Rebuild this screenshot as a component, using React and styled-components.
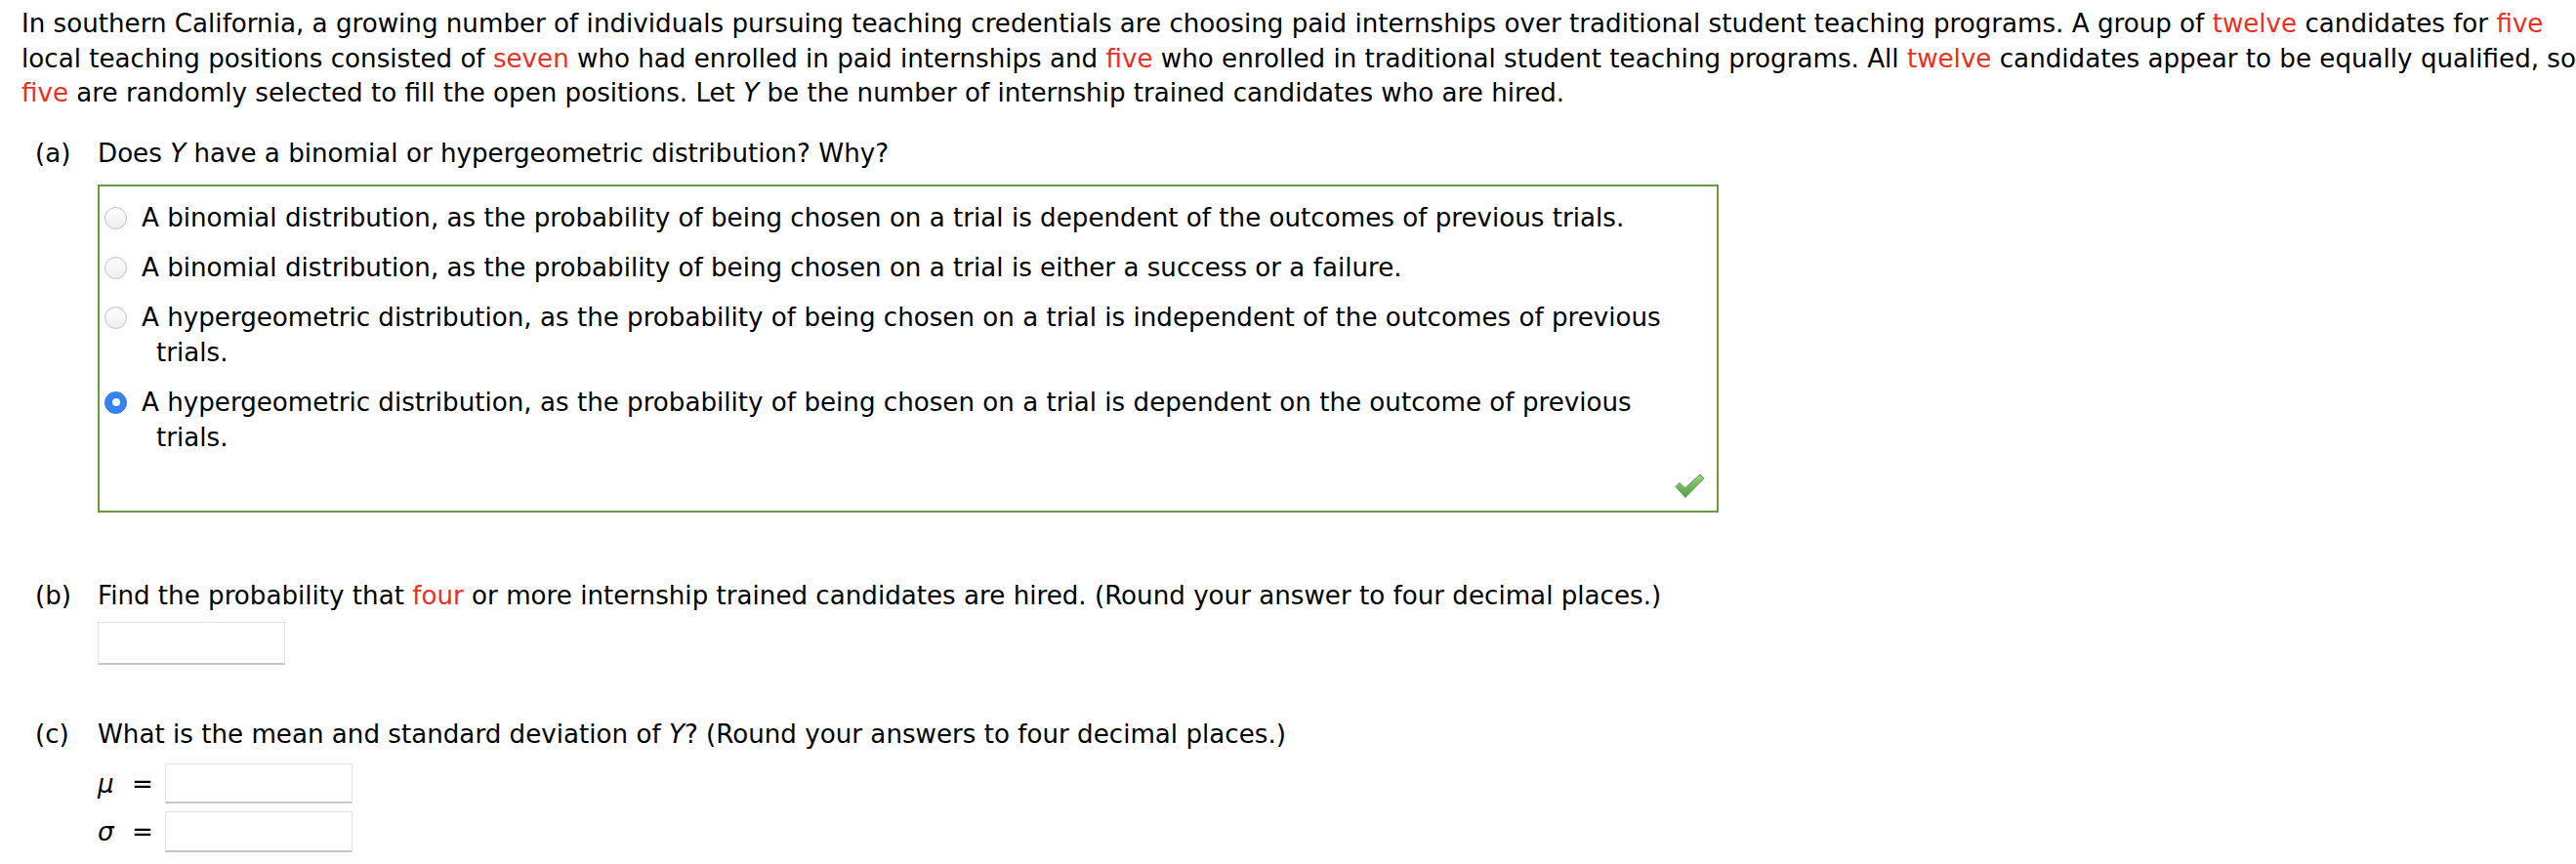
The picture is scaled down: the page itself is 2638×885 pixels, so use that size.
import React from 'react';
import styled, { createGlobalStyle } from 'styled-components';

const GlobalStyle = createGlobalStyle`
  html, body {
    margin: 0;
    padding: 0;
    background: #fff;
  }
  body {
    font-family: 'DejaVu Sans', Verdana, sans-serif;
    font-size: 26.15px;
    color: #000;
  }
`;

const Page = styled.div`
  padding: 7px 0 0 22px;
`;

const Intro = styled.p`
  margin: 0;
  line-height: 35.5px;
  white-space: nowrap;
`;

const Red = styled.span`
  color: #ec2f23;
`;

const Var = styled.i`
  font-style: italic;
`;

const Part = styled.div`
  display: flex;
  margin-top: ${(p) => p.$top}px;
  padding-left: 14px;
  line-height: 36px;
  white-space: nowrap;
`;

const PartLabel = styled.span`
  width: 64px;
  flex-shrink: 0;
`;

const Indented = styled.div`
  margin-left: 78px;
`;

const ChoiceBox = styled.div`
  margin-top: 14px;
  width: 1651px;
  border: 2px solid #6a9a40;
  padding: 14px 0 13px 5px;
  box-sizing: content-box;
`;

const Options = styled.div`
  display: flex;
  flex-direction: column;
  gap: 15px;
`;

const Option = styled.label`
  display: flex;
  align-items: flex-start;
  gap: 15px;
  line-height: 36px;
`;

const Radio = styled.span`
  flex-shrink: 0;
  width: 23px;
  height: 23px;
  margin-top: 6.5px;
  border-radius: 50%;
  box-sizing: border-box;
  display: flex;
  align-items: center;
  justify-content: center;
  ${(p) =>
    p.$checked
      ? `
    background: #3584f6;
    border: 1px solid #2f78e4;
  `
      : `
    background: linear-gradient(#ffffff, #eeeeee);
    border: 1px solid #c2c2c2;
    box-shadow: inset 0 1px 1px rgba(0,0,0,0.04);
  `}
`;

const RadioDot = styled.span`
  width: 8px;
  height: 8px;
  border-radius: 50%;
  background: #fff;
`;

const OptionText = styled.span`
  padding-left: 15px;
  text-indent: -15px;
  white-space: nowrap;
`;

const CheckRow = styled.div`
  display: flex;
  justify-content: flex-end;
  margin-top: 19px;
  padding-right: 12px;
  height: 25px;
`;

const AnswerInput = styled.div`
  width: 192px;
  height: ${(p) => p.$h || 42}px;
  box-sizing: border-box;
  border: 1px solid #e2e2e2;
  border-bottom: 2px solid #c8c8c8;
  background: #fff;
`;

const InputSlot = styled.div`
  margin-top: 9px;
`;

const StatRows = styled.div`
  display: flex;
  flex-direction: column;
  gap: 8px;
  margin-top: 12px;
`;

const StatRow = styled.div`
  display: flex;
  align-items: center;
`;

const StatSymbol = styled.span`
  width: 35px;
  font-style: italic;
`;

const StatEq = styled.span`
  width: 34px;
`;

const CheckMark = () => (
  <svg width="31" height="26" viewBox="0 0 31 26">
    <defs>
      <linearGradient id="chk" x1="0" y1="0" x2="0" y2="1">
        <stop offset="0" stopColor="#9bd486" />
        <stop offset="1" stopColor="#4f9d3d" />
      </linearGradient>
    </defs>
    <path
      d="M1 13.5 L5 9.5 L10.5 15 L26 1 L30 5 L11 24.5 Z"
      fill="url(#chk)"
      stroke="#5a9b47"
      strokeWidth="1"
      strokeLinejoin="round"
    />
  </svg>
);

const options = [
  ['A binomial distribution, as the probability of being chosen on a trial is dependent of the outcomes of previous trials.'],
  ['A binomial distribution, as the probability of being chosen on a trial is either a success or a failure.'],
  ['A hypergeometric distribution, as the probability of being chosen on a trial is independent of the outcomes of previous', 'trials.'],
  ['A hypergeometric distribution, as the probability of being chosen on a trial is dependent on the outcome of previous', 'trials.'],
];

const App = () => (
  <>
    <GlobalStyle />
    <Page>
      <Intro>
        In southern California, a growing number of individuals pursuing teaching credentials are choosing paid
        internships over traditional student teaching programs. A group of <Red>twelve</Red> candidates for{' '}
        <Red>five</Red>
        <br />
        local teaching positions consisted of <Red>seven</Red> who had enrolled in paid internships and{' '}
        <Red>five</Red> who enrolled in traditional student teaching programs. All <Red>twelve</Red> candidates
        appear to be equally qualified, so
        <br />
        <Red>five</Red> are randomly selected to fill the open positions. Let <Var>Y</Var> be the number of
        internship trained candidates who are hired.
      </Intro>

      <Part $top={25.5}>
        <PartLabel>(a)</PartLabel>
        <span>
          Does <Var>Y</Var> have a binomial or hypergeometric distribution? Why?
        </span>
      </Part>
      <Indented>
        <ChoiceBox>
          <Options>
            {options.map((lines, i) => (
              <Option key={i}>
                <Radio $checked={i === 3}>{i === 3 && <RadioDot />}</Radio>
                <OptionText>
                  {lines[0]}
                  {lines[1] && (
                    <>
                      <br />
                      {lines[1]}
                    </>
                  )}
                </OptionText>
              </Option>
            ))}
          </Options>
          <CheckRow>
            <CheckMark />
          </CheckRow>
        </ChoiceBox>
      </Indented>

      <Part $top={67}>
        <PartLabel>(b)</PartLabel>
        <span>
          Find the probability that <Red>four</Red> or more internship trained candidates are hired. (Round your
          answer to four decimal places.)
        </span>
      </Part>
      <Indented>
        <InputSlot>
          <AnswerInput $h={44} />
        </InputSlot>
      </Indented>

      <Part $top={53}>
        <PartLabel>(c)</PartLabel>
        <span>
          What is the mean and standard deviation of <Var>Y</Var>? (Round your answers to four decimal places.)
        </span>
      </Part>
      <Indented>
        <StatRows>
          <StatRow>
            <StatSymbol>μ</StatSymbol>
            <StatEq>=</StatEq>
            <AnswerInput $h={41} />
          </StatRow>
          <StatRow>
            <StatSymbol>σ</StatSymbol>
            <StatEq>=</StatEq>
            <AnswerInput $h={42} />
          </StatRow>
        </StatRows>
      </Indented>
    </Page>
  </>
);

export default App;
